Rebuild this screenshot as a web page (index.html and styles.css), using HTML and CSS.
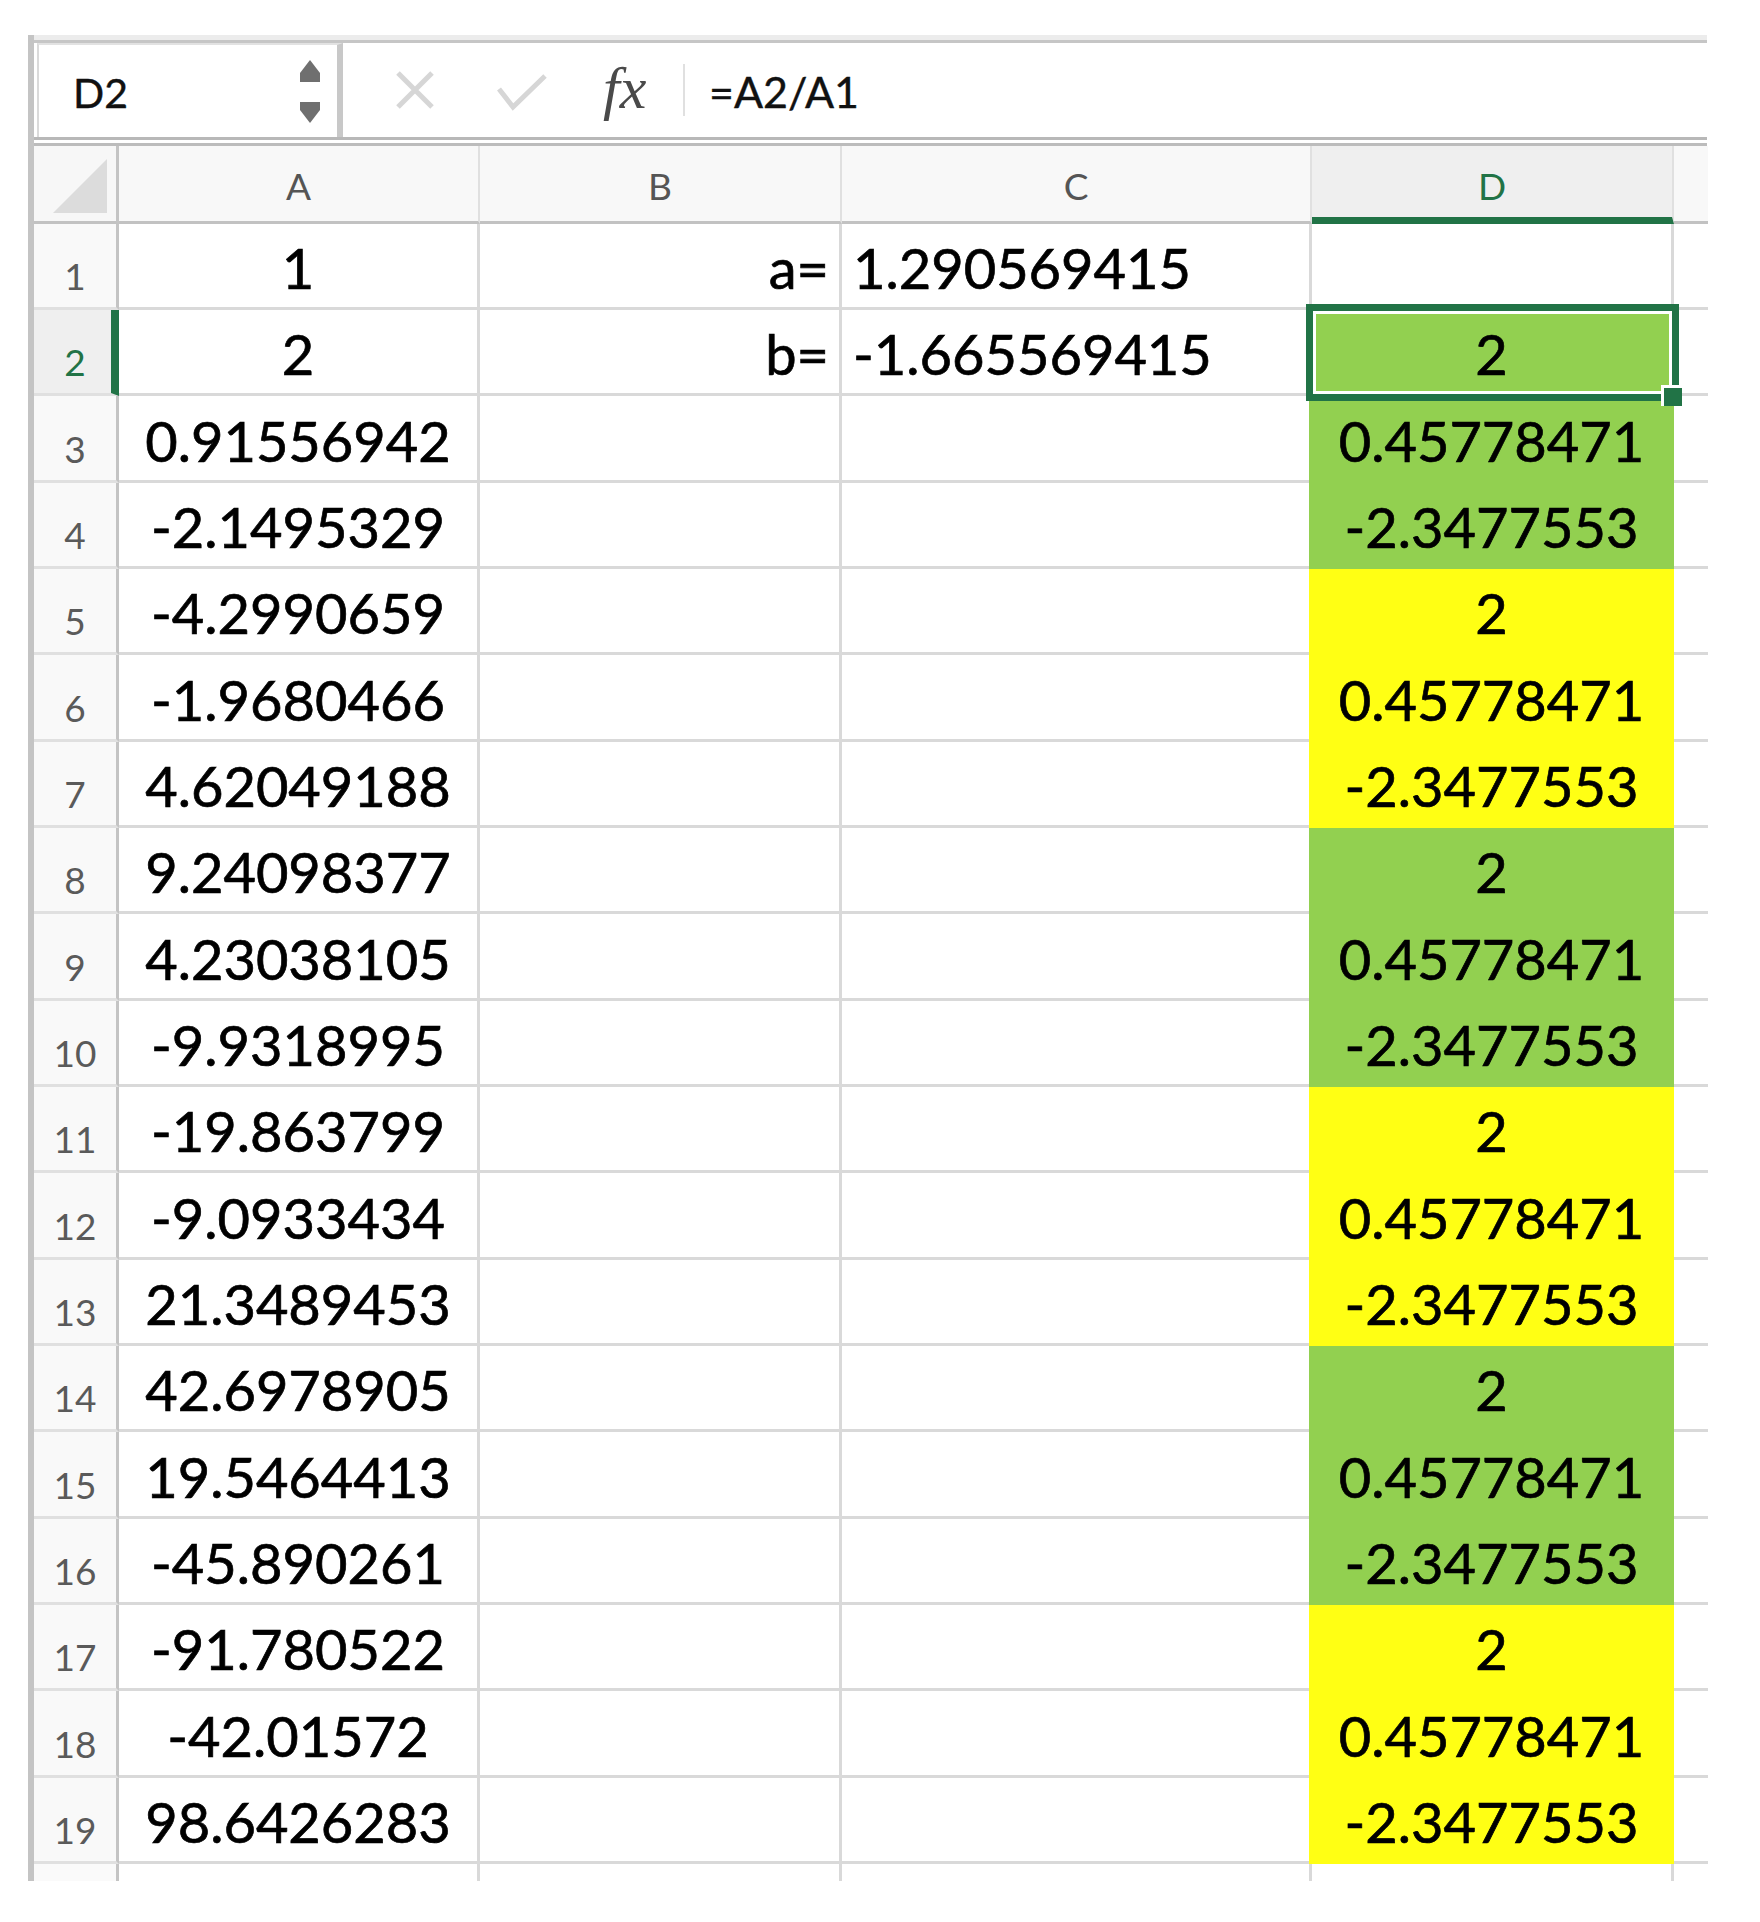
FILE: index.html
```html
<!DOCTYPE html>
<html>
<head>
<meta charset="utf-8">
<link rel="stylesheet" href="styles.css">
</head>
<body>
<div class="sheet">
  <div class="band"></div>
  <div class="fbar">
    <div class="namebox">
      <span class="ref">D2</span>
      <svg class="spin" width="26" height="64" viewBox="0 0 26 64">
        <polygon points="13,0 23,13 23,22 3,22 3,13" fill="#6f6f6f"/>
        <polygon points="3,42 23,42 23,50 13,63 3,50" fill="#6f6f6f"/>
      </svg>
    </div>
    <svg class="ico-x" width="40" height="40" viewBox="0 0 40 40">
      <path d="M3 3 L37 37 M37 3 L3 37" stroke="#d6d6d6" stroke-width="5" fill="none"/>
    </svg>
    <svg class="ico-ok" width="52" height="38" viewBox="0 0 52 38">
      <path d="M3 16 L17 34 L49 3" stroke="#d6d6d6" stroke-width="5" fill="none"/>
    </svg>
    <span class="fx">fx</span>
    <span class="fsep"></span>
    <span class="formula">=A2/A1</span>
  </div>
  <div class="grid">
    <div class="h corner"><svg width="54" height="54" viewBox="0 0 54 54"><polygon points="54,0 54,54 0,54" fill="#dcdcdc"/></svg></div>
    <div class="h">A</div>
    <div class="h">B</div>
    <div class="h">C</div>
    <div class="h hsel">D</div>
    <div class="h he"></div>

    <div class="r">1</div><div class="c ca">1</div><div class="c cb">a=</div><div class="c cc">1.290569415</div><div class="c cd"></div><div class="c e"></div>
    <div class="r rsel">2</div><div class="c ca">2</div><div class="c cb">b=</div><div class="c cc">-1.665569415</div><div class="c cd g sel">2<div class="selbox"></div><div class="handle"></div></div><div class="c e"></div>
    <div class="r">3</div><div class="c ca">0.91556942</div><div class="c"></div><div class="c"></div><div class="c cd g">0.45778471</div><div class="c e"></div>
    <div class="r">4</div><div class="c ca">-2.1495329</div><div class="c"></div><div class="c"></div><div class="c cd g">-2.3477553</div><div class="c e"></div>
    <div class="r">5</div><div class="c ca">-4.2990659</div><div class="c"></div><div class="c"></div><div class="c cd y">2</div><div class="c e"></div>
    <div class="r">6</div><div class="c ca">-1.9680466</div><div class="c"></div><div class="c"></div><div class="c cd y">0.45778471</div><div class="c e"></div>
    <div class="r">7</div><div class="c ca">4.62049188</div><div class="c"></div><div class="c"></div><div class="c cd y">-2.3477553</div><div class="c e"></div>
    <div class="r">8</div><div class="c ca">9.24098377</div><div class="c"></div><div class="c"></div><div class="c cd g">2</div><div class="c e"></div>
    <div class="r">9</div><div class="c ca">4.23038105</div><div class="c"></div><div class="c"></div><div class="c cd g">0.45778471</div><div class="c e"></div>
    <div class="r">10</div><div class="c ca">-9.9318995</div><div class="c"></div><div class="c"></div><div class="c cd g">-2.3477553</div><div class="c e"></div>
    <div class="r">11</div><div class="c ca">-19.863799</div><div class="c"></div><div class="c"></div><div class="c cd y">2</div><div class="c e"></div>
    <div class="r">12</div><div class="c ca">-9.0933434</div><div class="c"></div><div class="c"></div><div class="c cd y">0.45778471</div><div class="c e"></div>
    <div class="r">13</div><div class="c ca">21.3489453</div><div class="c"></div><div class="c"></div><div class="c cd y">-2.3477553</div><div class="c e"></div>
    <div class="r">14</div><div class="c ca">42.6978905</div><div class="c"></div><div class="c"></div><div class="c cd g">2</div><div class="c e"></div>
    <div class="r">15</div><div class="c ca">19.5464413</div><div class="c"></div><div class="c"></div><div class="c cd g">0.45778471</div><div class="c e"></div>
    <div class="r">16</div><div class="c ca">-45.890261</div><div class="c"></div><div class="c"></div><div class="c cd g">-2.3477553</div><div class="c e"></div>
    <div class="r">17</div><div class="c ca">-91.780522</div><div class="c"></div><div class="c"></div><div class="c cd y">2</div><div class="c e"></div>
    <div class="r">18</div><div class="c ca">-42.01572</div><div class="c"></div><div class="c"></div><div class="c cd y">0.45778471</div><div class="c e"></div>
    <div class="r">19</div><div class="c ca">98.6426283</div><div class="c"></div><div class="c"></div><div class="c cd y">-2.3477553</div><div class="c e"></div>

    <div class="r last"></div><div class="c last"></div><div class="c last"></div><div class="c last"></div><div class="c last"></div><div class="c e last"></div>
  </div>
</div>
</body>
</html>
```

FILE: styles.css
```css
* { box-sizing: border-box; }
html, body { margin: 0; padding: 0; background: #fff; }
body { font-family: Lato, "Open Sans", sans-serif; color: #000; }

.sheet {
  margin: 35px 0 0 28px;
  width: 1679px;
  border-left: 6px solid #c4c4c4;
}

.band { height: 5px; background: #ececec; }

.fbar {
  height: 100px;
  border-top: 3px solid #c6c6c6;
  border-bottom: 3px solid #b8b8b8;
  margin-bottom: 3px;
  display: flex;
  align-items: center;
  background: #fff;
}

.namebox {
  align-self: stretch;
  margin-left: 3px;
  width: 306px;
  border-left: 2px solid #dadada;
  border-top: 2px solid #e2e2e2;
  border-right: 6px solid #c8c8c8;
  display: flex;
  align-items: center;
  padding-left: 34px;
  padding-right: 14px;
}
.ref {
  font-size: 41px;
  line-height: 1;
  color: #111;
  padding-top: 2px;
  -webkit-text-stroke: 0.4px #111;
}
.spin { margin-left: auto; margin-top: 2px; }

.ico-x { margin-left: 52px; }
.ico-ok { margin-left: 61px; margin-top: 4px; }
.fx {
  margin-left: 55px;
  font-family: "Liberation Serif", serif;
  font-style: italic;
  font-size: 60px;
  line-height: 1;
  color: #4a4a4a;
  width: 56px;
  padding-bottom: 4px;
}
.fsep { margin-left: 24px; width: 2px; height: 52px; background: #e0e0e0; }
.formula {
  margin-left: 24px;
  font-size: 43px;
  line-height: 1;
  color: #111;
  padding-top: 2px;
  -webkit-text-stroke: 0.4px #111;
}

.grid {
  border-top: 3px solid #bcbcbc;
  display: grid;
  grid-template-columns: 85px 361px 362px 470px 362px 34px;
  grid-template-rows: 78px repeat(6, 86px 86px 87px) 86px 17px;
}

.h {
  background: #f8f8f8;
  border-right: 2px solid #e0e0e0;
  border-bottom: 3px solid #c2c2c2;
  display: flex;
  align-items: flex-end;
  justify-content: center;
  padding-bottom: 17px;
  font-size: 37px;
  line-height: 1;
  color: #555;
}
.h.corner {
  border-right: 3px solid #c4c4c4;
  align-items: flex-end;
  justify-content: flex-end;
  padding: 0 9px 8px 0;
  background: #f7f7f7;
}
.h.corner svg { display: block; }
.h.hsel {
  background: #efefef;
  color: #217346;
  border-bottom: 7px solid #217346;
  padding-bottom: 13px;
}
.h.he { border-right: none; }

.r {
  background: #f9f9f9;
  border-right: 3px solid #c4c4c4;
  border-bottom: 3px solid #e0e0e0;
  display: flex;
  align-items: flex-end;
  justify-content: center;
  padding-bottom: 13px;
  font-size: 37px;
  line-height: 1;
  color: #5a5a5a;
}
.r.rsel {
  background: #efefef;
  color: #217346;
  border-right: 8px solid #217346;
  padding-left: 5px;
}

.c {
  border-right: 3px solid #d9d9d9;
  border-bottom: 3px solid #d9d9d9;
  display: flex;
  align-items: flex-end;
  padding: 0 10px 11px;
  font-size: 56px;
  line-height: 1;
  white-space: nowrap;
  -webkit-text-stroke: 0.7px #000;
}
.c.e { border-right: none; }
.ca, .cd { justify-content: center; }
.cb { justify-content: flex-end; }
.cc { justify-content: flex-start; padding-left: 11px; }

.last { border-bottom: none; }
.r.last { background: #fafafa; }

.g { background: #92d050; border-color: #92d050; box-shadow: -3px 0 0 #92d050; }
.y { background: #ffff14; border-color: #ffff14; box-shadow: -3px 0 0 #ffff14; }

.sel { position: relative; }
.selbox {
  position: absolute;
  left: -6px;
  top: -6px;
  width: 373px;
  height: 97px;
  border: 7px solid #217346;
  box-shadow: inset 0 0 0 3px #fff;
}
.handle {
  position: absolute;
  left: 349px;
  top: 75px;
  width: 21px;
  height: 21px;
  background: #217346;
  border: 3px solid #fff;
  border-right: none;
  border-bottom: none;
}
```
